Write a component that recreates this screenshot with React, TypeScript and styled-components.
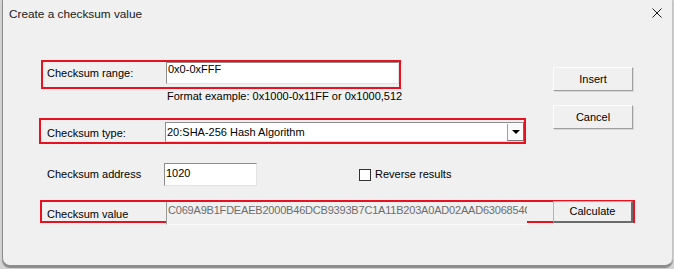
import React from "react";
import styled, { createGlobalStyle } from "styled-components";

const GlobalStyle = createGlobalStyle`
  html, body {
    margin: 0;
    padding: 0;
    width: 674px;
    height: 269px;
    overflow: hidden;
    background: #d4d4d4;
  }
  body {
    font-family: "Liberation Sans", Arial, sans-serif;
    font-size: 11px;
    color: #000;
  }
  * { box-sizing: border-box; }
`;

const Window = styled.div`
  margin-left: 2px;
  width: 671px;
  height: 266px;
  background: #f0f0f0;
  border-left: 1px solid #8f8f8f;
  border-right: 1px solid #c4c4c4;
  border-bottom: 1px solid #8f8f8f;
  border-radius: 0 0 8px 8px;
  box-shadow: 0 2px 1px rgba(0, 0, 0, 0.35);
  display: flex;
  flex-direction: column;
`;

const TitleBar = styled.div`
  height: 26px;
  display: flex;
  align-items: flex-start;
  justify-content: space-between;
  padding: 6px 10px 0 6px;
`;

const Title = styled.div`
  font-family: "Liberation Sans", Arial, sans-serif;
  font-size: 11.8px;
  line-height: 16px;
  color: #1a1a1a;
`;

const CloseButton = styled.div`
  width: 10px;
  height: 10px;
  margin-top: 2px;
  display: flex;
`;

const Content = styled.div`
  padding-left: 36px;
  display: flex;
  flex-direction: column;
`;

const TopSection = styled.div`
  display: flex;
`;

const FormColumn = styled.div`
  width: 488px;
  padding-top: 34px;
  display: flex;
  flex-direction: column;
`;

const ButtonColumn = styled.div`
  margin-left: 26px;
  width: 80px;
  padding-top: 41px;
  display: flex;
  flex-direction: column;
  gap: 14px;
`;

const HighlightBox = styled.div<{ $ml: number; $w: number; $h: number; $mt?: number }>`
  display: flex;
  align-items: flex-start;
  border: 2px solid #e8111f;
  margin-left: ${(p) => p.$ml}px;
  margin-top: ${(p) => p.$mt ?? 0}px;
  width: ${(p) => p.$w}px;
  height: ${(p) => p.$h}px;
`;

const Label = styled.div<{ $w: number; $pl: number; $pt: number }>`
  flex: none;
  width: ${(p) => p.$w}px;
  padding-left: ${(p) => p.$pl}px;
  padding-top: ${(p) => p.$pt}px;
  line-height: 13px;
  white-space: nowrap;
`;

const TextInput = styled.div<{ $w?: number; $h: number; $pt: number }>`
  ${(p) => (p.$w ? `width: ${p.$w}px; flex: none;` : "flex: 1;")}
  height: ${(p) => p.$h}px;
  background: #fff;
  border-top: 1px solid #8c8c8c;
  border-left: 1px solid #8c8c8c;
  border-right: 1px solid #e3e3e3;
  border-bottom: 1px solid #e3e3e3;
  padding: ${(p) => p.$pt}px 0 0 1px;
  line-height: 13px;
  white-space: nowrap;
`;

const FormatHint = styled.div`
  margin-top: 1px;
  margin-left: 128px;
  line-height: 13px;
  white-space: nowrap;
`;

const Combo = styled.div`
  flex: 1;
  margin-top: 2px;
  height: 20px;
  background: #fff;
  border-top: 1px solid #8c8c8c;
  border-left: 1px solid #8c8c8c;
  border-right: 1px solid #6e6e6e;
  border-bottom: 1px solid #dcdcdc;
  display: flex;
  align-items: flex-start;
`;

const ComboText = styled.div`
  flex: 1;
  padding: 3px 0 0 1px;
  line-height: 13px;
  white-space: nowrap;
`;

const DropButton = styled.div`
  width: 16px;
  height: 17px;
  margin-top: 1px;
  border-left: 1px solid #a0a0a0;
  border-bottom: 1px solid #7a7a7a;
  background: #fafafa;
  display: flex;
  align-items: center;
  justify-content: center;
`;

const Arrow = styled.div`
  width: 0;
  height: 0;
  border-left: 4px solid transparent;
  border-right: 4px solid transparent;
  border-top: 4px solid #000;
`;

const AddressRow = styled.div`
  margin-top: 19px;
  height: 23px;
  display: flex;
  align-items: flex-start;
`;

const CheckGroup = styled.label`
  margin-left: 102px;
  display: flex;
  align-items: flex-start;
  gap: 4px;
`;

const CheckBox = styled.span`
  width: 12px;
  height: 12px;
  margin-top: 6px;
  border: 1px solid #333;
  background: #fff;
`;

const CheckText = styled.span`
  margin-top: 5px;
  line-height: 13px;
  white-space: nowrap;
`;

const ValueField = styled.div`
  position: relative;
  z-index: 1;
  flex: none;
  width: 361px;
  height: 23px;
  background: #f0f0f0;
  border-left: 1px solid #9a9a9a;
  border-bottom: 1px solid #fbfbfb;
  padding: 2px 0 0 1px;
  line-height: 13px;
  color: #6d6d6d;
  letter-spacing: -0.2px;
  white-space: nowrap;
  overflow: hidden;
`;

const Button = styled.div<{ $default?: boolean; $h: number; $mt?: number }>`
  width: 80px;
  height: ${(p) => p.$h}px;
  margin-top: ${(p) => p.$mt ?? 0}px;
  background: #f0f0f0;
  display: flex;
  align-items: center;
  justify-content: center;
  line-height: 13px;
  ${(p) =>
    p.$default
      ? `border-top: 1px solid #b4b4b4; border-left: 1px solid #b4b4b4; border-right: 2px solid #6a6a6a; border-bottom: 2px solid #6a6a6a;`
      : `border-top: 1px solid #fcfcfc; border-left: 1px solid #fcfcfc; border-right: 1px solid #a0a0a0; border-bottom: 1px solid #a0a0a0; box-shadow: 1px 1px 0 #d8d8d8;`}
`;

const ValueSpacer = styled.div`
  flex: 1;
`;

export default function App() {
  return (
    <>
      <GlobalStyle />
      <Window>
        <TitleBar>
          <Title>Create a checksum value</Title>
          <CloseButton>
            <svg width="10" height="10" viewBox="0 0 10 10">
              <path d="M0.5 0.5 L9.5 9.5 M9.5 0.5 L0.5 9.5" stroke="#1a1a1a" strokeWidth="1" fill="none" />
            </svg>
          </CloseButton>
        </TitleBar>
        <Content>
          <TopSection>
            <FormColumn>
              <HighlightBox $ml={2} $w={360} $h={29}>
                <Label $w={123} $pl={4} $pt={5}>Checksum range:</Label>
                <TextInput $h={22} $pt={0}>0x0-0xFFF</TextInput>
              </HighlightBox>
              <FormatHint>Format example: 0x1000-0x11FF or 0x1000,512</FormatHint>
              <HighlightBox $ml={0} $w={487} $h={26} $mt={15}>
                <Label $w={124} $pl={6} $pt={7}>Checksum type:</Label>
                <Combo>
                  <ComboText>20:SHA-256 Hash Algorithm</ComboText>
                  <DropButton>
                    <Arrow />
                  </DropButton>
                </Combo>
              </HighlightBox>
              <AddressRow>
                <Label $w={125} $pl={8} $pt={5}>Checksum address</Label>
                <TextInput $w={93} $h={23} $pt={3}>1020</TextInput>
                <CheckGroup>
                  <CheckBox />
                  <CheckText>Reverse results</CheckText>
                </CheckGroup>
              </AddressRow>
            </FormColumn>
            <ButtonColumn>
              <Button $h={24}>Insert</Button>
              <Button $h={24}>Cancel</Button>
            </ButtonColumn>
          </TopSection>
          <HighlightBox $ml={1} $w={595} $h={23} $mt={14}>
            <Label $w={124} $pl={5} $pt={6}>Checksum value</Label>
            <ValueField>C069A9B1FDEAEB2000B46DCB9393B7C1A11B203A0AD02AAD6306854C0</ValueField>
            <ValueSpacer />
            <Button $default $h={22} $mt={-1}>Calculate</Button>
          </HighlightBox>
        </Content>
      </Window>
    </>
  );
}
